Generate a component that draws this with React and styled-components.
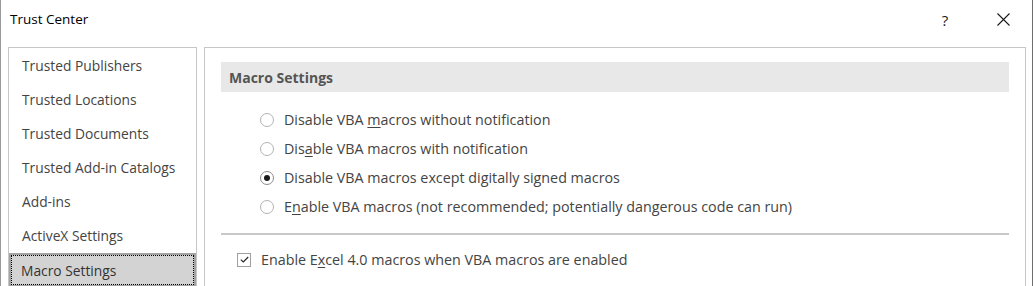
import React from "react";
import styled, { createGlobalStyle } from "styled-components";

const GlobalStyle = createGlobalStyle`
  html, body {
    margin: 0;
    padding: 0;
    background: #ffffff;
  }
  body {
    font-family: "Open Sans", "Noto Sans", "Liberation Sans", sans-serif;
    font-size: 14px;
  }
`;

const navItems = [
  "Trusted Publishers",
  "Trusted Locations",
  "Trusted Documents",
  "Trusted Add-in Catalogs",
  "Add-ins",
  "ActiveX Settings",
  "Macro Settings",
];

// label pieces: [before, accessKey, after]
const macroOptions = [
  { id: "none", label: ["Disable VBA ", "m", "acros without notification"] },
  { id: "notify", label: ["Dis", "a", "ble VBA macros with notification"] },
  { id: "signed", label: ["Disable VBA macros except di", "g", "itally signed macros"] },
  { id: "all", label: ["E", "n", "able VBA macros (not recommended; potentially dangerous code can run)"] },
];

const App = () => {
  const selected = "signed";
  const activeNav = "Macro Settings";

  return (
    <>
      <GlobalStyle />
      <Window>
        <TitleBar>
          <Title>Trust Center</Title>
          <TitleButtons>
            <HelpButton>?</HelpButton>
            <CloseButton>
              <svg width="13" height="13" viewBox="0 0 13 13">
                <path d="M0.5 0.5 L12.5 12.5 M12.5 0.5 L0.5 12.5" stroke="#1a1a1a" strokeWidth="1.1" fill="none" />
              </svg>
            </CloseButton>
          </TitleButtons>
        </TitleBar>

        <Body>
          <Nav>
            {navItems.map((item) => (
              <NavItem key={item} active={item === activeNav}>
                {item}
              </NavItem>
            ))}
          </Nav>

          <Panel>
            <SectionHeader>Macro Settings</SectionHeader>

            <RadioList>
              {macroOptions.map((opt) => (
                <OptionRow key={opt.id}>
                  <Radio checked={opt.id === selected} />
                  <OptionText>
                    {opt.label[0]}
                    <Key>{opt.label[1]}</Key>
                    {opt.label[2]}
                  </OptionText>
                </OptionRow>
              ))}
            </RadioList>

            <Separator />

            <CheckRow>
              <CheckBox>
                <svg width="9" height="7" viewBox="0 0 9 7">
                  <path d="M0.8 3.6 L3.3 6 L8.2 1" stroke="#222" strokeWidth="1.1" fill="none" />
                </svg>
              </CheckBox>
              <OptionText>
                Enable E<Key>x</Key>cel 4.0 macros when VBA macros are enabled
              </OptionText>
            </CheckRow>
          </Panel>
        </Body>
      </Window>
    </>
  );
};

export default App;

const Window = styled.div`
  box-sizing: border-box;
  width: 1033px;
  height: 286px;
  overflow: hidden;
  background: #ffffff;
  border-left: 1px solid #9a9a9a;
  border-right: 1px solid #6e6e6e;
  display: flex;
  flex-direction: column;
`;

const TitleBar = styled.div`
  height: 39px;
  display: flex;
  align-items: center;
  justify-content: space-between;
  padding: 0 0 0 9px;
  flex-shrink: 0;
`;

const Title = styled.span`
  font-size: 13.5px;
  color: #000;
  margin-top: -1px;
`;

const TitleButtons = styled.div`
  display: flex;
  align-items: center;
`;

const HelpButton = styled.span`
  width: 58px;
  text-align: center;
  font-size: 15px;
  color: #222;
`;

const CloseButton = styled.span`
  width: 58px;
  height: 38px;
  display: flex;
  align-items: center;
  justify-content: center;
`;

const Body = styled.div`
  flex: 1;
  display: flex;
  gap: 7px;
  padding: 8px 6px 0 7px;
  min-height: 0;
`;

const Nav = styled.div`
  box-sizing: border-box;
  width: 189px;
  flex-shrink: 0;
  border: 1px solid #c6c6c6;
  border-bottom: none;
  display: flex;
  flex-direction: column;
`;

const NavItem = styled.div`
  box-sizing: border-box;
  height: 34px;
  flex-shrink: 0;
  display: flex;
  align-items: center;
  padding-left: ${(p) => (p.active ? "10px" : "13px")};
  color: ${(p) => (p.active ? "#333333" : "#444444")};
  font-size: 13.8px;
  background: ${(p) => (p.active ? "#d3d3d3" : "transparent")};
  border: ${(p) => (p.active ? "2px solid #a3a3a3" : "none")};
  outline: ${(p) => (p.active ? "1px dotted #000" : "none")};
  outline-offset: -3px;
  margin-top: ${(p) => (p.active ? "1px" : "0")};
`;

const Panel = styled.div`
  flex: 1;
  box-sizing: border-box;
  border: 1px solid #c6c6c6;
  border-bottom: none;
  padding: 14px 16px 0 16px;
  display: flex;
  flex-direction: column;
`;

const SectionHeader = styled.div`
  height: 30px;
  display: flex;
  align-items: center;
  padding-left: 8px;
  background: #e8e8e8;
  color: #555555;
  font-weight: 700;
  font-size: 14px;
`;

const RadioList = styled.div`
  display: flex;
  flex-direction: column;
  padding: 13px 0 0 39px;
`;

const OptionRow = styled.div`
  height: 29px;
  display: flex;
  align-items: center;
  gap: 10px;
`;

const Radio = styled.span`
  box-sizing: border-box;
  width: 14px;
  height: 14px;
  border-radius: 50%;
  border: 1px solid ${(p) => (p.checked ? "#8c8c8c" : "#b3b3b3")};
  background: #fff;
  display: flex;
  align-items: center;
  justify-content: center;
  flex-shrink: 0;
  &::after {
    content: "";
    width: 6px;
    height: 6px;
    border-radius: 50%;
    background: ${(p) => (p.checked ? "#1a1a1a" : "transparent")};
  }
`;

const OptionText = styled.span`
  color: #444444;
  font-size: 14.3px;
  white-space: nowrap;
`;

const Key = styled.span`
  text-decoration: underline;
  text-underline-offset: 2px;
`;

const Separator = styled.div`
  height: 2px;
  background: #c8c8c8;
  margin-top: 12px;
`;

const CheckRow = styled.div`
  display: flex;
  align-items: center;
  gap: 10px;
  padding-left: 16px;
  margin-top: 15px;
`;

const CheckBox = styled.span`
  box-sizing: border-box;
  width: 14px;
  height: 14px;
  border: 1px solid #a0a0a0;
  background: #fff;
  display: flex;
  align-items: center;
  justify-content: center;
  flex-shrink: 0;
`;
